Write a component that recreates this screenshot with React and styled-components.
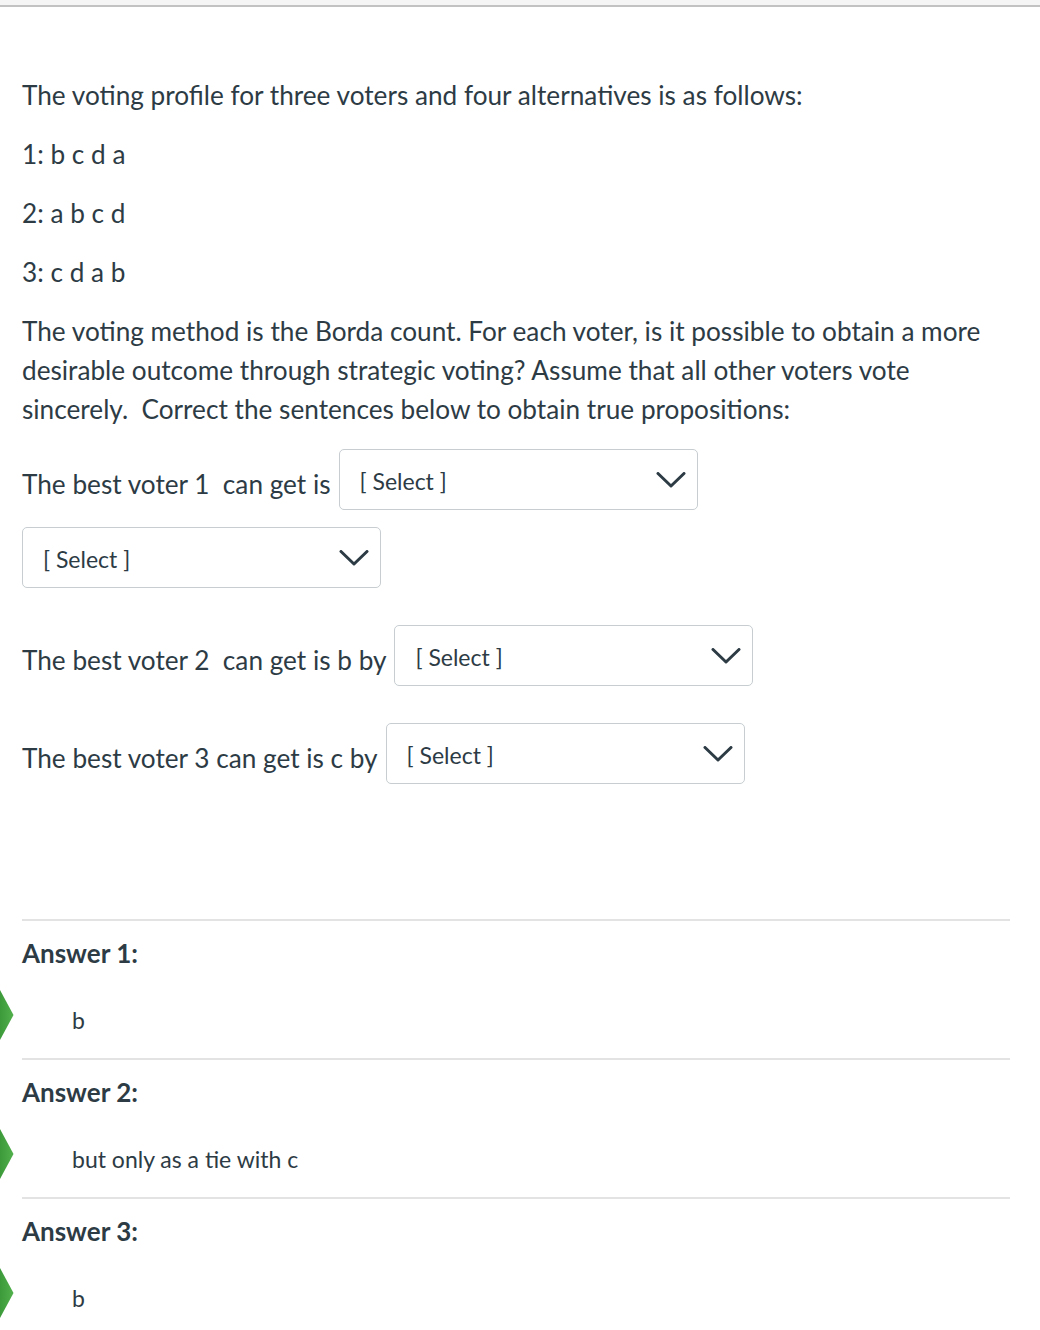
import React from "react";
import styled, { createGlobalStyle } from "styled-components";

const Global = createGlobalStyle`
  html, body { margin: 0; padding: 0; background: #ffffff; }
  body {
    font-family: Lato, "Open Sans", "Liberation Sans", sans-serif;
    color: #2d3b45;
  }
`;

const TopBar = styled.div`
  height: 5px;
  background: #f5f5f5;
  border-bottom: 2px solid #c2c2c2;
`;

const Content = styled.main`
  padding: 69px 30px 0 22px;
`;

const P = styled.p`
  margin: 0 0 20px;
  font-size: 26.2px;
  line-height: 39px;
  &:last-of-type { margin-bottom: 20px; }
`;

const Row = styled.div`
  display: flex;
  align-items: flex-start;
  margin-top: ${(p) => p.$top || 0}px;
`;

const Label = styled.span`
  font-size: 26.2px;
  line-height: 39px;
  padding-top: 16px;
  margin-right: 8px;
  white-space: pre;
`;

const SelectBox = styled.div`
  box-sizing: border-box;
  width: 359px;
  height: 61px;
  border: 1px solid #c7cdd1;
  border-radius: 5px;
  background: #fff;
  display: flex;
  align-items: center;
  justify-content: space-between;
  padding: 2px 11px 0 20px;
  font-size: 23px;
  color: #2d3b45;
`;

const Chevron = () => (
  <svg width="30" height="18" viewBox="0 0 30 18" aria-hidden="true">
    <polyline
      points="2,1.5 15,14 28,1.5"
      fill="none"
      stroke="#2d3b45"
      strokeWidth="3"
      strokeLinecap="round"
      strokeLinejoin="round"
    />
  </svg>
);

const Select = () => (
  <SelectBox>
    <span>[ Select ]</span>
    <Chevron />
  </SelectBox>
);

const Answers = styled.section`
  margin-top: 135px;
`;

const AnswerBlock = styled.div`
  border-top: 2px solid #e3e3e3;
  padding: 14px 0 20px;
`;

const AnswerLabel = styled.h3`
  margin: 0;
  font-size: 26px;
  font-weight: 700;
  line-height: 36px;
`;

const AnswerText = styled.div`
  position: relative;
  margin-top: 31px;
  padding-left: 50px;
  font-size: 23px;
  line-height: 36px;
`;

const Arrow = styled.svg`
  position: absolute;
  left: -22px;
  top: -12px;
`;

const CorrectArrow = () => (
  <Arrow width="14" height="50" viewBox="0 0 14 50" aria-hidden="true">
    <defs>
      <linearGradient id="g" x1="0" x2="1" y1="0" y2="0">
        <stop offset="0" stopColor="#3c9a3a" />
        <stop offset="1" stopColor="#52b04c" />
      </linearGradient>
    </defs>
    <polygon points="0,0 13.5,25 0,50" fill="url(#g)" />
  </Arrow>
);

const Answer = ({ n, text }) => (
  <AnswerBlock>
    <AnswerLabel>Answer {n}:</AnswerLabel>
    <AnswerText>
      <CorrectArrow />
      {text}
    </AnswerText>
  </AnswerBlock>
);

export default function App() {
  return (
    <>
      <Global />
      <TopBar />
      <Content>
        <P>The voting profile for three voters and four alternatives is as follows:</P>
        <P>1: b c d a</P>
        <P>2: a b c d</P>
        <P>3: c d a b</P>
        <P>
          The voting method is the Borda count. For each voter, is it possible to obtain a more
          desirable outcome through strategic voting? Assume that all other voters vote
          sincerely.&nbsp; Correct the sentences below to obtain true propositions:
        </P>
        <Row $top={0}>
          <Label>{"The best voter 1\u00a0 can get is"}</Label>
          <Select />
        </Row>
        <Row $top={17}>
          <Select />
        </Row>
        <Row $top={37}>
          <Label>{"The best voter 2\u00a0 can get is b by"}</Label>
          <Select />
        </Row>
        <Row $top={37}>
          <Label>{"The best voter 3 can get is c by"}</Label>
          <Select />
        </Row>
        <Answers>
          <Answer n={1} text="b" />
          <Answer n={2} text="but only as a tie with c" />
          <Answer n={3} text="b" />
        </Answers>
      </Content>
    </>
  );
}
